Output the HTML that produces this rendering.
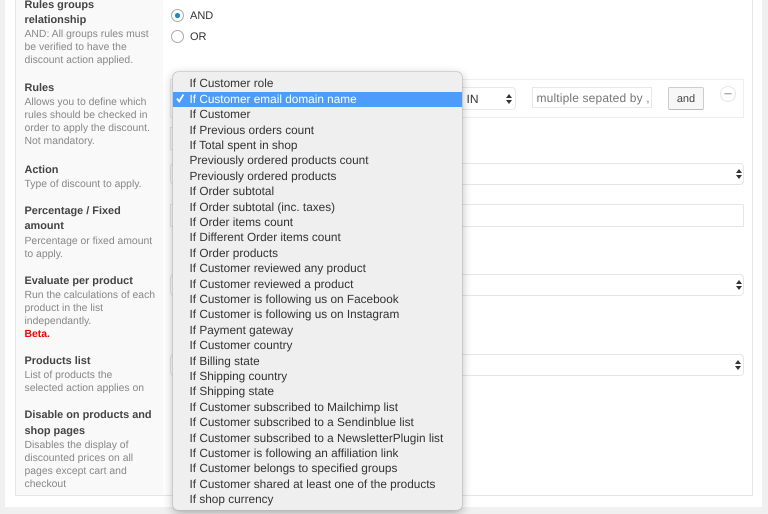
<!DOCTYPE html>
<html><head><meta charset="utf-8"><style>
html,body{margin:0;padding:0;width:768px;height:514px;overflow:hidden;background:#f0f0f0;font-family:"Liberation Sans",sans-serif;text-rendering:geometricPrecision}
#w{position:absolute;left:0;top:0;width:768px;height:514px;filter:blur(.3px);overflow:hidden}
.a{position:absolute;white-space:nowrap}
.t{left:24.5px;font-size:10.9px;font-weight:700;color:#444;line-height:15px}
.d{left:24.5px;font-size:10.4px;color:#888;line-height:13px}
.f{background:#fff;border:1px solid #e4e4e4;box-sizing:border-box;position:absolute}
.r{border-radius:4px}
.i{position:absolute;left:189.5px;font-size:11.8px;color:#333;line-height:15.4px;white-space:nowrap}
.ar{position:absolute;width:6px;height:10px}
</style></head><body><div id="w">
<div class="a" style="left:5px;top:0;width:757px;height:507px;background:#fff"></div>
<div class="a" style="left:15px;top:-1px;width:738px;height:497px;box-sizing:border-box;border:1px solid #e6e6e6;background:#fff"></div>
<div class="a" style="left:16px;top:0;width:147px;height:495px;background:#f9f9f9"></div>

<div class="a t" style="top:-2px">Rules groups<br></div>
<div class="a t" style="top:13px">relationship</div>
<div class="a d" style="top:28px">AND: All groups rules must<br>be verified to have the<br>discount action applied.</div>
<div class="a t" style="top:81px">Rules</div>
<div class="a d" style="top:96px">Allows you to define which<br>rules should be checked in<br>order to apply the discount.<br>Not mandatory.</div>
<div class="a t" style="top:163px">Action</div>
<div class="a d" style="top:178px">Type of discount to apply.</div>
<div class="a t" style="top:204px">Percentage / Fixed</div>
<div class="a t" style="top:219px">amount</div>
<div class="a d" style="top:235px">Percentage or fixed amount<br>to apply.</div>
<div class="a t" style="top:274px">Evaluate per product</div>
<div class="a d" style="top:289px">Run the calculations of each<br>product in the list<br>independantly.</div>
<div class="a" style="left:24.5px;top:328px;font-size:10.4px;font-weight:700;color:#f00;line-height:13px">Beta.</div>
<div class="a t" style="top:354px">Products list</div>
<div class="a d" style="top:369px">List of products the<br>selected action applies on</div>
<div class="a t" style="top:408px">Disable on products and</div>
<div class="a t" style="top:424px">shop pages</div>
<div class="a d" style="top:439px">Disables the display of<br>discounted prices on all<br>pages except cart and<br>checkout</div>

<svg class="a" style="left:170px;top:8px" width="16" height="36" viewBox="0 0 16 36">
<circle cx="7.5" cy="7.5" r="6" fill="#fff" stroke="#aaa"/><circle cx="7.5" cy="7.5" r="2.6" fill="#1e8cbe"/>
<circle cx="7.5" cy="28.5" r="6" fill="#fff" stroke="#aaa"/></svg>
<div class="a" style="left:190px;top:9px;font-size:11px;color:#333;line-height:14px">AND</div>
<div class="a" style="left:190px;top:30px;font-size:11px;color:#333;line-height:14px">OR</div>

<div class="f" style="left:170px;top:79px;width:574px;height:39px;border-color:#eee"></div>
<div class="f r" style="left:440px;top:87px;width:76px;height:23px;border-color:#e8e8e8"></div>
<div class="a" style="left:466.5px;top:92px;font-size:12px;color:#333;line-height:15px">IN</div>
<svg class="ar" style="left:506px;top:94px" viewBox="0 0 6 10"><path d="M3 0L6 4H0ZM3 10L0 6H6Z" fill="#333"/></svg>
<div class="f" style="left:532px;top:87px;width:120px;height:21px;border-color:#e8e8e8"></div>
<div class="a" style="left:536.5px;top:91px;font-size:12px;color:#777;line-height:15px;letter-spacing:.15px">multiple sepated by ,</div>
<div class="a" style="left:668px;top:87px;width:36px;height:23px;box-sizing:border-box;border:1px solid #ccc;border-bottom-color:#bbb;background:#f7f7f7;border-radius:2px;font-size:11px;color:#444;text-align:center;line-height:22px">and</div>
<svg class="a" style="left:719px;top:85px" width="18" height="18" viewBox="0 0 18 18"><circle cx="9" cy="9" r="7.5" fill="#fff" stroke="#e4e4e4"/><path d="M5.5 8.7H12.5" stroke="#aaa" stroke-width="1.4"/></svg>

<div class="f" style="left:170px;top:127px;width:40px;height:23px;border-color:#e8e8e8"></div>
<div class="f r" style="left:170px;top:163px;width:574px;height:22px;border-color:#e6e6e6"></div>
<svg class="ar" style="left:736px;top:169px" viewBox="0 0 6 10"><path d="M3 0L6 4H0ZM3 10L0 6H6Z" fill="#333"/></svg>
<div class="f" style="left:170px;top:204px;width:574px;height:23px;border-color:#e6e6e6"></div>
<div class="f r" style="left:170px;top:274px;width:574px;height:22px;border-color:#e6e6e6"></div>
<svg class="ar" style="left:736px;top:280px" viewBox="0 0 6 10"><path d="M3 0L6 4H0ZM3 10L0 6H6Z" fill="#333"/></svg>
<div class="f r" style="left:170px;top:354px;width:574px;height:22px;border-color:#e6e6e6"></div>
<svg class="ar" style="left:735px;top:360px" viewBox="0 0 6 10"><path d="M3 0L6 4H0ZM3 10L0 6H6Z" fill="#333"/></svg>

<div class="a" style="left:172.5px;top:72px;width:289.5px;height:438px;background:#efefef;border-radius:5px;box-shadow:0 0 0 .5px #b5b5b5,0 3px 10px rgba(0,0,0,.3)"></div>
<div class="a" style="left:172.5px;top:91.5px;width:289.5px;height:15.4px;background:#4d9bfb"></div>
<svg class="a" style="left:175px;top:93px" width="11" height="11" viewBox="0 0 11 11"><path d="M2 5.5L4.2 8.5L8.5 1.5" fill="none" stroke="#fff" stroke-width="1.7"/></svg>
<div class="i" style="top:76.4px">If Customer role</div>
<div class="i" style="top:91.8px;color:#fff">If Customer email domain name</div>
<div class="i" style="top:107.2px">If Customer</div>
<div class="i" style="top:122.6px">If Previous orders count</div>
<div class="i" style="top:138px">If Total spent in shop</div>
<div class="i" style="top:153.4px">Previously ordered products count</div>
<div class="i" style="top:168.8px">Previously ordered products</div>
<div class="i" style="top:184.2px">If Order subtotal</div>
<div class="i" style="top:199.6px">If Order subtotal (inc. taxes)</div>
<div class="i" style="top:215px">If Order items count</div>
<div class="i" style="top:230.4px">If Different Order items count</div>
<div class="i" style="top:245.8px">If Order products</div>
<div class="i" style="top:261.2px">If Customer reviewed any product</div>
<div class="i" style="top:276.6px">If Customer reviewed a product</div>
<div class="i" style="top:292px">If Customer is following us on Facebook</div>
<div class="i" style="top:307.4px">If Customer is following us on Instagram</div>
<div class="i" style="top:322.8px">If Payment gateway</div>
<div class="i" style="top:338.2px">If Customer country</div>
<div class="i" style="top:353.6px">If Billing state</div>
<div class="i" style="top:369px">If Shipping country</div>
<div class="i" style="top:384.4px">If Shipping state</div>
<div class="i" style="top:399.8px">If Customer subscribed to Mailchimp list</div>
<div class="i" style="top:415.2px">If Customer subscribed to a Sendinblue list</div>
<div class="i" style="top:430.6px">If Customer subscribed to a NewsletterPlugin list</div>
<div class="i" style="top:446px">If Customer is following an affiliation link</div>
<div class="i" style="top:461.4px">If Customer belongs to specified groups</div>
<div class="i" style="top:476.8px">If Customer shared at least one of the products</div>
<div class="i" style="top:492.2px">If shop currency</div>
</div></body></html>
